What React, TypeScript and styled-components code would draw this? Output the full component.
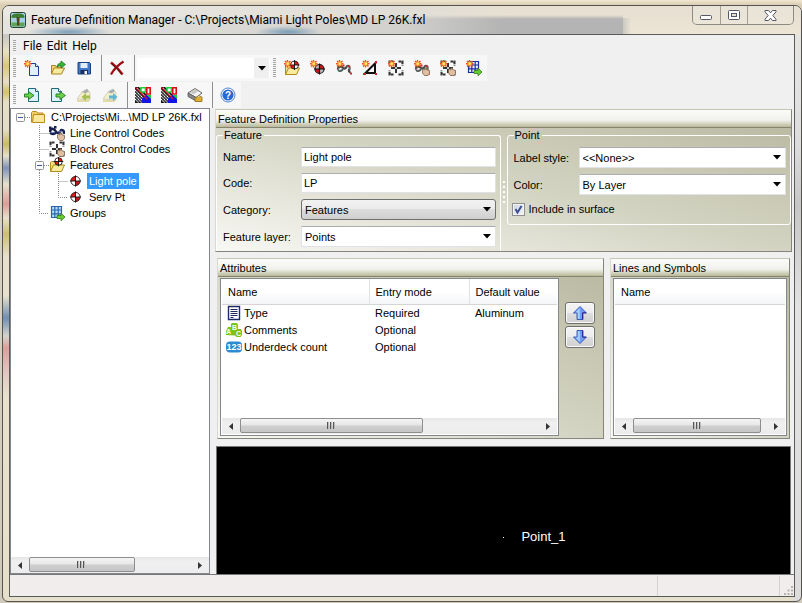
import React from "react";
import styled, { createGlobalStyle, css } from "styled-components";

const uiFont = `"Liberation Sans", Arial, sans-serif`;
const captionFont = `Roboto, "Noto Sans", sans-serif`;

const GlobalStyle = createGlobalStyle`
  *, *::before, *::after { box-sizing: border-box; }
  body { margin: 0; background: #ebe2cd; color: #000; font: 11px/14px ${uiFont}; }
  button, input, select { font: inherit; color: inherit; }
`;

/* ---------- window frame ---------- */

const Desktop = styled.div`
  display: flex;
  min-height: 100vh;
  padding: 5px 0 1px 2px;
  background: linear-gradient(#f1e6cf, #d9ceb4 5px, #d9d5c8 40px, #cfcabb);
`;

const Window = styled.div`
  flex: 1;
  min-width: 0;
  display: flex;
  flex-direction: column;
  border: 1px solid #555450;
  border-radius: 7px 7px 6px 6px;
  padding: 0 6px 4px 6px;
  background:
    linear-gradient(#ece5d5, #c9c8c3 30px, #e8e1c4 45px, #d9c878 60px, #e6dfc8 76px, #d5c267 86px, #e6dfc8 96px,
      #e3dcc6 124px, #c9ba62 138px, #e6e0cc 150px, #7f92b8 162px, #e6e0cc 178px, #dc9d98 198px, #e6e0cc 212px,
      #cdbf70 228px, #e6e0cc 250px, #e6e0cc 290px, #6f8fb4 312px, #d5d3cc 330px, #dba09c 342px, #e2c6c2 366px,
      #e8e2cc 390px, #e6dfc9) left / 7px 100% no-repeat,
    linear-gradient(#e8e4da, #e4e4e4 60px, #dcdcdc 140px, #c6c6c6 200px, #e2e2e2 300px, #dcdcdc) right / 8px 100% no-repeat,
    #e6dfcb;
`;

const TitleBar = styled.header`
  display: flex;
  align-items: center;
  height: 28px;
  margin: 0 -6px;
  padding-left: 7px;
  border-radius: 6px 6px 0 0;
  background:
    radial-gradient(ellipse closest-side, rgba(91, 137, 172, 0.75), transparent) 24px 20px / 84px 12px no-repeat,
    radial-gradient(ellipse closest-side, rgba(91, 137, 172, 0.75), transparent) 252px 20px / 66px 12px no-repeat,
    linear-gradient(90deg, rgba(235, 233, 228, 0.9), rgba(222, 221, 217, 0.7) 400px, transparent 500px),
    linear-gradient(transparent 9px, #b4b4b4 13px) left / 620px 100% no-repeat,
    linear-gradient(90deg, #cbc9c2, transparent) 620px 12px / 8px 16px no-repeat,
    linear-gradient(#e6dfd2, #ece5d5);
`;

const Title = styled.h1`
  flex: 1;
  margin: 0 0 0 5px;
  font: 400 12px/16px ${captionFont};
  white-space: nowrap;
`;

const CaptionButtons = styled.div`
  align-self: flex-start;
  display: flex;
  margin-right: 7px;
  border: 1px solid #8d8a82;
  border-top: 0;
  border-radius: 0 0 5px 5px;
`;

const CaptionButton = styled.button<{ $wide?: boolean }>`
  display: grid;
  place-items: center;
  width: ${(p) => (p.$wide ? 46 : 27)}px;
  height: 18px;
  padding: 0;
  border: 0;
  border-left: 1px solid #a29e94;
  background: rgba(255, 255, 255, 0.12);
  &:first-child { border-left: 0; }
`;

const Client = styled.div`
  flex: 1;
  display: flex;
  flex-direction: column;
  border: 1px solid #5a5a58;
  background: #f0f0f0;
`;

/* ---------- bars ---------- */

const MenuBar = styled.nav`
  display: flex;
  align-items: center;
  height: 20px;
  padding: 1px 0 0 3px;
`;

const MenuButton = styled.button`
  padding: 0;
  border: 0;
  margin-right: 5px;
  background: none;
  font: 12px/16px ${captionFont};
`;

const Grip = styled.span`
  flex: none;
  width: 3px;
  height: 20px;
  margin-right: 3px;
  background: repeating-linear-gradient(#a5a5a5 0 1px, #f4f4f4 1px 2px);
`;

const MenuGrip = styled(Grip)`
  height: 12px;
  margin-right: 7px;
`;

const ToolRows = styled.div`
  display: grid;
  gap: 1px;
`;

const ToolRow = styled.div`
  display: flex;
`;

const ToolBar = styled.div`
  display: flex;
  align-items: center;
  height: 26px;
  padding-left: 3px;
  background: #f7f7f7;
`;

const ToolButton = styled.button`
  display: grid;
  place-items: center;
  width: 26px;
  height: 24px;
  padding: 0;
  border: 0;
  background: none;
`;

const Separator = styled.span`
  width: 1px;
  height: 26px;
  margin: 0 2px 0 4px;
  background: #8f8f8f;
`;

const ToolCombo = styled.div`
  width: 133px;
  display: grid;
  grid-template-columns: 1fr 15px;
  height: 20px;
  background: #fff;
  border-right: 1px solid #fff;
`;

const ComboInput = styled.input`
  min-width: 0;
  border: 0;
  padding: 0 3px;
  background: #fff;
`;

const ComboDrop = styled.button`
  display: grid;
  place-items: center;
  padding: 0;
  border: 0;
  background: #efefef;
`;

/* ---------- work area ---------- */

const Work = styled.main`
  flex: 1;
  display: grid;
  grid-template-columns: 200px minmax(0, 1fr);
  column-gap: 5px;
  min-height: 0;
`;

const TreePane = styled.section`
  display: flex;
  flex-direction: column;
  justify-content: space-between;
  border: 1px solid #828790;
  background: #fff;
`;

const Tree = styled.ul`
  margin: 0;
  padding: 0;
  list-style: none;
`;

const TreeRow = styled.li`
  display: flex;
  align-items: center;
  height: 16px;
  svg { flex: none; }
`;

const TreeLabel = styled.span<{ $selected?: boolean }>`
  padding: 1px 2px;
  white-space: nowrap;
  ${(p) => p.$selected && css`background: #3399ff; color: #fff;`}
`;

const IconSlot = styled.span`
  display: grid;
  align-items: center;
  justify-items: start;
  width: 19px;
  height: 16px;
`;

const Right = styled.div`
  display: flex;
  flex-direction: column;
  padding: 1px 2px 0 0;
  min-width: 0;
`;

const Panel = styled.section`
  display: flex;
  flex-direction: column;
  border: 1px solid #85857c;
  border-left-color: #d9d9d2;
  border-top-color: #c6c6b6;
  background: linear-gradient(to bottom left, #b8b8a0, #d3d3c2 50%, #f8f8f4);
`;

const PanelTitle = styled.h2`
  flex: none;
  height: 18px;
  margin: 0;
  padding: 2px 2px 1px;
  border-bottom: 1px solid #85856f;
  background: linear-gradient(#fbfbf9, #f1f1ec 60%, #b9b998);
  font: inherit;
`;

const PropertyGrid = styled.div`
  display: grid;
  grid-template-columns: minmax(0, 1fr) 6px minmax(0, 1fr);
  align-items: start;
`;

const Group = styled.fieldset<{ $open?: boolean }>`
  display: grid;
  gap: 6px;
  min-width: 0;
  margin: 0;
  padding: 5px 4px 7px 6px;
  border: 1px solid #fff;
  border-radius: 3px;
  ${(p) => p.$open && css`border-bottom: 0; border-radius: 3px 3px 0 0; padding-bottom: 4px;`}
`;

const Legend = styled.legend`
  padding: 0 2px 0 1px;
`;

const Field = styled.div<{ $label: number }>`
  display: grid;
  grid-template-columns: ${(p) => p.$label}px minmax(0, 1fr);
  align-items: center;
`;

const TextInput = styled.input`
  width: 100%;
  height: 20px;
  padding: 0 2px;
  border: 1px solid #dfe2e6;
  border-top-color: #abadb3;
  border-radius: 1px;
  background: #fff;
`;

const SelectWrap = styled.span<{ $button?: boolean }>`
  display: grid;
  grid-template-columns: minmax(0, 1fr) 16px;
  align-items: center;
  height: 21px;
  border: 1px solid #dfe2e6;
  border-top-color: #abadb3;
  border-radius: 1px;
  background: #fff;
  select, svg { grid-row: 1; }
  select { grid-column: 1 / -1; }
  svg { grid-column: 2; justify-self: center; pointer-events: none; }
  ${(p) => p.$button && css`
    border-color: #707070;
    border-radius: 3px;
    background: linear-gradient(#f2f2f2, #ebebeb 50%, #dddddd 50%, #cfcfcf);
  `}
`;

const Select = styled.select`
  appearance: none;
  width: 100%;
  height: 19px;
  padding: 0 18px 0 3px;
  border: 0;
  background: transparent;
`;

const Splitter = styled.span`
  justify-self: center;
  align-self: center;
  width: 2px;
  height: 24px;
  margin-top: 6px;
  background: repeating-linear-gradient(#fff 0 2px, transparent 2px 5px);
`;

const CheckLabel = styled.label`
  display: flex;
  align-items: center;
  gap: 4px;
  height: 16px;
  margin-left: -2px;
`;

const CheckMark = styled.span`
  display: grid;
  input, svg { grid-area: 1 / 1; }
  svg { pointer-events: none; opacity: 0; }
  input:checked + svg { opacity: 1; }
`;

const CheckBox = styled.input`
  appearance: none;
  width: 13px;
  height: 13px;
  margin: 0;
  border: 1px solid #8e8f8f;
  background: linear-gradient(135deg, #cdd3dc, #f6f6f6);
  box-shadow: inset 0 0 0 1px #f4f4f4;
`;

const Lists = styled.div`
  display: grid;
  grid-template-columns: minmax(0, 387fr) minmax(0, 180fr);
  gap: 6px;
  height: 181px;
  margin: 6px 2px 0 2px;
`;

const AttributeBody = styled.div`
  flex: 1;
  display: grid;
  grid-template-columns: minmax(0, 1fr) 44px;
  padding: 1px 0 2px 2px;
`;

const SymbolBody = styled(AttributeBody)`
  grid-template-columns: minmax(0, 1fr);
  padding-right: 2px;
`;

const ListBox = styled.div`
  display: flex;
  flex-direction: column;
  justify-content: space-between;
  border: 1px solid #828790;
  background: #fff;
  padding: 0 1px 1px 1px;
`;

const Table = styled.table`
  width: 100%;
  table-layout: fixed;
  border-collapse: collapse;
  th, td { padding: 0 0 0 6px; text-align: left; font-weight: 400; white-space: nowrap; }
  th {
    height: 25px;
    padding-top: 1px;
    border-right: 1px solid #e0e2e4;
    border-bottom: 1px solid #d5d5d5;
    background: linear-gradient(#fff 50%, #f4f5f7);
  }
  th:last-child { border-right: 0; }
  td { height: 17px; }
`;

const NameCell = styled.span`
  display: flex;
  align-items: center;
  gap: 2px;
  margin-left: -2px;
`;

const MoveButtons = styled.div`
  display: flex;
  flex-direction: column;
  gap: 2px;
  padding: 24px 8px 0 6px;
`;

const MoveButton = styled.button`
  display: grid;
  place-items: center;
  height: 22px;
  padding: 0;
  border: 1px solid #707070;
  border-radius: 3px;
  background: linear-gradient(#f4f4f4, #ececec 50%, #dddddd 50%, #d0d0d0);
  box-shadow: inset 0 0 0 1px #fafafa;
`;

const ScrollTrack = styled.div`
  display: grid;
  grid-template-columns: 17px minmax(0, 1fr) 18px;
  height: 16px;
  background: linear-gradient(#e6e6e6, #f0f0f0 30%, #ececec);
`;

const ScrollArrow = styled.button`
  display: grid;
  place-items: center;
  padding: 0;
  border: 0;
  background: none;
`;

const ScrollThumb = styled.span<{ $size: number }>`
  display: grid;
  place-items: center;
  width: ${(p) => p.$size}%;
  height: 15px;
  margin-left: 1px;
  border: 1px solid #8e8e8e;
  border-radius: 2px;
  background: linear-gradient(#f5f5f5, #e6e6e6 48%, #cfcfcf 52%, #c6c6c8);
`;

const Preview = styled.section`
  flex: 1;
  display: flex;
  align-items: center;
  justify-content: center;
  gap: 17px;
  min-height: 128px;
  margin: 7px 1px 0 1px;
  padding: 53px 0 0 62px;
  border: 1px solid #777;
  border-width: 1px 1px 0 1px;
  background: #000;
  color: #fff;
  font-size: 13px;
  line-height: 16px;
`;

const PointDot = styled.span`
  width: 1px;
  height: 1px;
  background: #fff;
`;

const StatusBar = styled.footer`
  display: grid;
  grid-template-columns: minmax(0, 1fr) 122px 15px;
  height: 22px;
  border-top: 1px solid #777;
  padding-top: 1px;
  background: #f0edec;
`;

const StatusCell = styled.span`
  display: flex;
  align-items: flex-end;
  justify-content: flex-end;
  border-left: 1px solid #d4d2d0;
  &:first-child { border-left: 0; }
`;

/* ---------- icons ---------- */

type Kids = { children: React.ReactNode };
const Ico = ({ children }: Kids) => (
  <svg width="16" height="16" viewBox="0 0 16 16" aria-hidden="true">{children}</svg>
);

const IconText = styled.text`
  font: 700 7px ${uiFont};
  fill: #fff;
`;

const HelpMark = styled(IconText)`
  font-size: 10px;
`;

const NumberMark = styled(IconText)`
  font-size: 9px;
`;

const Burst = () => (
  <g>
    <path d="M3.500 0v7.500M0 3.800h7.500M1 1l5.500 5.500M6.500 1L1 6.500" stroke="#f04a1c" strokeWidth="1.400" />
    <circle cx="3.700" cy="3.700" r="2.200" fill="#ff9a2b" />
    <circle cx="3.700" cy="3.700" r="1.200" fill="#fff27a" />
  </g>
);

const Quad = ({ x, y, r }: { x: number; y: number; r: number }) => (
  <g transform={`translate(${x} ${y})`}>
    <circle r={r} fill="#fff" />
    <path d={`M0 0V${-r}A${r} ${r} 0 0 1 ${r} 0z`} fill="#e81818" />
    <path d={`M0 0V${r}A${r} ${r} 0 0 1 ${-r} 0z`} fill="#e81818" />
    <circle r={r} fill="none" stroke="#2a1414" strokeWidth=".9" />
    <path d={`M0 ${-r - 1}V${r + 1}M${-r - 1} 0H${r + 1}`} stroke="#111" strokeWidth=".9" />
  </g>
);

const RedQuad = ({ x, y, r }: { x: number; y: number; r: number }) => (
  <g transform={`translate(${x} ${y})`}>
    <circle r={r} fill="#fff" />
    <path d={`M0 0V${-r}A${r} ${r} 0 0 0 ${-r} 0z`} fill="#e81818" />
    <path d={`M0 0V${r}A${r} ${r} 0 0 0 ${r} 0z`} fill="#c81414" />
    <circle r={r} fill="none" stroke="#2a1414" strokeWidth=".9" />
    <path d={`M0 ${-r - 1}V${r + 1}M${-r - 1} 0H${r + 1}`} stroke="#111" strokeWidth=".9" />
  </g>
);

const DarkQuad = ({ x, y, r }: { x: number; y: number; r: number }) => (
  <g transform={`translate(${x} ${y})`}>
    <circle r={r} fill="#b9b9b9" />
    <path d={`M0 0V${-r}A${r} ${r} 0 0 1 ${r} 0z`} fill="#d01818" />
    <path d={`M0 0V${r}A${r} ${r} 0 0 1 ${-r} 0z`} fill="#d01818" />
    <circle r={r} fill="none" stroke="#222" strokeWidth="1.200" />
    <path d={`M0 ${-r - 1}V${r + 1}M${-r - 1} 0H${r + 1}`} stroke="#111" strokeWidth="1.200" />
  </g>
);

const Folder = ({ y = 0 }: { y?: number }) => (
  <g transform={`translate(0 ${y})`}>
    <path d="M1.500 13.500v-9l1-1h4l1 1.500h5v2" fill="#f7dd83" stroke="#b08a1c" />
    <path d="M1.500 13.500L4.500 7h11l-3 6.500z" fill="#fbeb9c" stroke="#b08a1c" />
  </g>
);

const Hand = () => (
  <path d="M8.500 10l1-1 1.500 1V8h1.500v1.500l3 1v3L14 15.500h-3.500L8.500 13z" fill="#dfbfa2" stroke="#7d6048" strokeWidth=".8" />
);

const Curve = () => (
  <g>
    <path d="M2 9.500c0-3.500 3-3.500 4.500-2s3 1.500 4-.5 3.500-1 3 1.500-1.500 3 1 4" fill="none" stroke="#4c4c4c" strokeWidth="2.400" />
    <path d="M2 9.500c1 2.500 3.500 2 5-.5" fill="none" stroke="#4c4c4c" strokeWidth="1.800" />
    <path d="M2.500 9c1 1.500 2.500 1 3.500-1M11 7.500c1-1 2-.5 2 1.500" fill="none" stroke="#c8c8c8" strokeWidth=".9" />
    <path d="M6.500 4.500h2v2h-2zM14 12.500h2v2h-2zM12 5.500h2v1.500h-2z" fill="#d5202a" />
  </g>
);

const Cross = () => (
  <g fill="none" stroke="#333">
    <path d="M8 3v10M3 8h10" strokeWidth="2" />
    <path d="M5.500 1.500H1.500v4M10.500 1.500h4v4M5.500 14.500H1.500v-4M10.500 14.500h4v-4" strokeWidth="2" strokeDasharray="3 .6" />
    <circle cx="8" cy="8" r="1" fill="#fff" stroke="none" />
  </g>
);

const GridArrow = ({ light }: { light?: boolean }) => (
  <g>
    <path d="M2 1.500h10.500v11H2z" fill={light ? "#b8dcf6" : "#e8f0ff"} />
    <path d="M2.500 1v12M5.800 1v12M9.200 1v12M12.500 1v12M2 1.500h11M2 5h11M2 8.800h11M2 12.500h11" stroke={light ? "#2b63ad" : "#1b2f9c"} strokeWidth="1.200" />
    <path d="M8 10.500h4V8.200l4 3.800-4 3.800v-2.300H8z" fill="#66cc2f" stroke="#2f7d12" strokeWidth=".8" />
  </g>
);

const PageWithArrow = ({ out }: { out?: boolean }) => (
  <Ico>
    <path d={out ? "M1.500 1.500h7l3 3v10h-10z" : "M4.500 1.500h7l3 3v10h-10z"} fill="#d9f2fb" stroke="#1c6b7c" />
    <path d={out ? "M8.500 1.500v3h3" : "M11.500 1.500v3h3"} fill="#fff" stroke="#1c6b7c" />
    <path d={out ? "M6 7h4V4.500L15.500 8.500 10 12.500V10H6z" : "M.5 7h4V4.500L10 8.500l-5.500 4V10h-4z"} fill="#6fd04a" stroke="#1d7a20" strokeWidth=".9" />
  </Ico>
);

const Tag = ({ arrow, flip }: { arrow: string; flip?: boolean }) => (
  <Ico>
    <path d="M1 12l5-7 5-3 3 4v7z" fill="#f3efcb" stroke="#c9c7ab" strokeWidth=".8" />
    <path d="M6 5l5-3 2 2.500-4 2z" fill="#a9adb2" />
    <path d="M1 14h12" stroke="#ddd28c" strokeWidth="1.500" />
    <path d={flip ? "M7 8.500h4V6l4.500 4-4.500 4v-2.500H7z" : "M14 8.500h-4V6l-4.500 4 4.500 4v-2.500h4z"} fill={arrow} />
  </Ico>
);

const Hatch = () => (
  <Ico>
    <path d="M0 0h16v16H0z" fill="#fff" />
    <path d="M0 0h4l12 12v4H0z" fill="#111" />
    <path d="M0 3l12 12M0 6l9.500 9.500M0 9l6.500 6.500M0 12l3.500 3.500M2 1l12 12" stroke="#fff" strokeWidth="1.100" strokeDasharray="1.500 .6" />
    <path d="M6 .8h4.500V5H6z" fill="#fff" stroke="#12d532" strokeWidth="1.600" />
    <path d="M11.800 .8h3.400V7h-3.400z" fill="#fff" stroke="#d90e18" strokeWidth="1.600" />
    <path d="M16 8v4l-4-4z" fill="#12d532" />
    <path d="M7 11.500l4.500-3.500 4.500 4v4H7z" fill="#1414e6" />
    <path d="M0 0l12 12" stroke="#e01820" strokeWidth="1.200" />
  </Ico>
);

const icons: Record<string, React.ReactNode> = {
  create: (
    <Ico>
      <path d="M5.500 3.500h6l3 3v9h-9z" fill="#e2effd" stroke="#1d3f98" />
      <path d="M11.500 3.500v3h3" fill="#fff" stroke="#1d3f98" />
      <Burst />
    </Ico>
  ),
  open: (
    <Ico>
      <path d="M1.500 13.500v-8h4l1 1.500h6" fill="#f3d774" stroke="#a9831d" />
      <path d="M1.500 14L4 8h10.500l-3 6z" fill="#fbeb9c" stroke="#a9831d" />
      <path d="M7 7c.5-3 2-4 4-4V1l4.500 3.500L11 8V5.500C9.500 5.500 8.500 6 7 7z" fill="#35b834" stroke="#126a17" strokeWidth=".7" />
    </Ico>
  ),
  save: (
    <Ico>
      <path d="M2 2.500h11.500l1 1v10.500H2z" fill="#3f78c8" stroke="#1c3f80" />
      <path d="M4.500 3h7v5h-7z" fill="#e3edf8" />
      <path d="M4.500 10h7.500v4H4.500z" fill="#1b2f5c" />
      <path d="M8.500 11h2.500v3H8.500z" fill="#f5f5f5" />
    </Ico>
  ),
  remove: (
    <Ico>
      <path d="M2 2.500c4 3 8 7 11.500 12" fill="none" stroke="#9b0f14" strokeWidth="2.600" />
      <path d="M14.500 1.500C9 5 5 9 2 14.500" fill="none" stroke="#9b0f14" strokeWidth="2.200" />
      <path d="M3 4l9.500 9.500" stroke="#4a1014" strokeWidth=".8" />
    </Ico>
  ),
  newFeatureFolder: <Ico><Folder y={1} /><Quad x={10.500} y={5} r={4} /><Burst /></Ico>,
  newPoint: <Ico><DarkQuad x={9.500} y={9} r={4.500} /><Burst /></Ico>,
  newLine: <Ico><Curve /><Burst /></Ico>,
  newPolygon: (
    <Ico>
      <path d="M3.500 13L13 3.500V13z" fill="#f7f7f7" stroke="#111" strokeWidth="2" />
      <path d="M1 13h3v2H1zM13 13h2v2h-2zM13 1h2v2.500h-2z" fill="#d5202a" />
      <Burst />
    </Ico>
  ),
  newBlock: <Ico><Cross /><Burst /></Ico>,
  newLineCode: <Ico><Curve /><Hand /><Burst /></Ico>,
  newBlockCode: <Ico><Cross /><Hand /><Burst /></Ico>,
  newGroup: <Ico><GridArrow /><Burst /></Ico>,
  importFile: <PageWithArrow />,
  exportFile: <PageWithArrow out />,
  importTag: <Tag arrow="#a5bd52" />,
  exportTag: <Tag arrow="#5fb4d4" flip />,
  hatch: <Hatch />,
  stack: (
    <Ico>
      <path d="M1 6l7-4.500L15 6l-6 4.500z" fill="#f6f6f6" stroke="#555" strokeWidth=".9" />
      <path d="M1 6v3.500l8 4.500v-3.500z" fill="#8b8b86" stroke="#555" strokeWidth=".8" />
      <path d="M3 5.500l5-3.200 3 2.200-4.500 3z" fill="#c8c8c4" />
      <path d="M8 10.500h7v4H8z" fill="#e2ae30" stroke="#8e6a17" strokeWidth=".8" />
      <path d="M9.500 10.500l2-2 3.500 1.500v.5" fill="#f6db7d" stroke="#8e6a17" strokeWidth=".8" />
    </Ico>
  ),
  help: (
    <Ico>
      <circle cx="8" cy="8" r="7" fill="#fff" stroke="#3b78cc" strokeWidth=".9" />
      <circle cx="8" cy="8" r="5.600" fill="#2868d4" />
      <HelpMark x="8" y="12" textAnchor="middle">?</HelpMark>
    </Ico>
  ),
  folder: (
    <Ico>
      <path d="M1.500 13.500v-10l1-1h4l1 1.500h5.500v2" fill="#f4cf63" stroke="#b98b1d" />
      <path d="M3.500 5.500h11v8h-12z" fill="#fbe79c" stroke="#b98b1d" />
    </Ico>
  ),
  lineCodes: (
    <Ico>
      <path d="M1 7c0-4 4-4 5.500-1s4 2 5 0 4-1 3.500 3" fill="none" stroke="#18204f" strokeWidth="2.600" />
      <path d="M1 7.500c1.500 2.500 4.500 2 6 0" fill="none" stroke="#18204f" strokeWidth="2.200" />
      <path d="M2 7c1 1 3 1 4-.5M9 7c1.500 0 2.500-1 4-1" fill="none" stroke="#6478c4" />
      <path d="M0 1.500h2.500V4H0zM5 1h2.500v2.500H5z" fill="#18204f" />
      <Hand />
    </Ico>
  ),
  blockCodes: <Ico><Cross /><Hand /></Ico>,
  features: <Ico><Folder y={1} /><Quad x={9.500} y={4.500} r={3.800} /></Ico>,
  point: <Ico><RedQuad x={7.500} y={8} r={4.600} /></Ico>,
  groups: <Ico><GridArrow light /></Ico>,
  list: (
    <Ico>
      <path d="M2.500 1.500h11v13h-11z" fill="#fff" stroke="#1d2a66" strokeWidth="1.400" />
      <path d="M4.500 4.500h7M4.500 6.500h7M4.500 8.500h7M4.500 10.500h7M4.500 12.500h3" stroke="#1d2a66" />
    </Ico>
  ),
  text: (
    <Ico>
      <path d="M0 13V9l2-4h3V2l1-1h5l1 2v4h3l1 2v4l-1.500 2h-4L9 13.500z" fill="#7cc414" />
      <IconText x="0" y="12">A</IconText>
      <IconText x="6" y="8">B</IconText>
      <IconText x="10" y="14">C</IconText>
    </Ico>
  ),
  number: (
    <Ico>
      <rect x="0" y="2.500" width="16" height="11" rx="4" fill="#2b8bd0" />
      <NumberMark x="8" y="11" textAnchor="middle">123</NumberMark>
    </Ico>
  ),
  app: (
    <Ico>
      <rect x=".5" y=".5" width="15" height="15" rx="2" fill="#a7cdea" stroke="#24432b" />
      <path d="M1.500 10.500h13v4h-13z" fill="#5fa455" />
      <path d="M1.500 5.500C1 2 5 1.500 8 1.500S15 2 14.500 5.500c-1.500 1-3.500 0-5 .5L9.300 9H6.700L6.500 6C5 5.500 3 6.500 1.500 5.500z" fill="#3c7d2f" />
      <path d="M6 5l1 1v7.500h2.300V6l1-1-1.500.5z" fill="#5d4020" />
    </Ico>
  ),
};

const Down = () => (
  <svg width="8" height="5" viewBox="0 0 8 5" aria-hidden="true"><path d="M0 0h8L4 4.500z" fill="#000" /></svg>
);

const MoveArrow = ({ down }: { down?: boolean }) => (
  <svg width="14" height="14" viewBox="0 0 14 14" aria-hidden="true">
    <g transform={down ? "matrix(1 0 0 -1 0 14)" : undefined}>
      <path d="M7 .5L13.500 7H10v6.500H4V7H.5z" fill="#6f9df4" stroke="#2f4fb5" strokeWidth=".9" />
      <path d="M4.800 6.500V13h2V2L2.500 6.300z" fill="#a3d0ff" />
      <path d="M9.500 6.500v7M10 6.800h3" stroke="#35268c" />
    </g>
  </svg>
);

const ScrollBar = ({ size }: { size: number }) => (
  <ScrollTrack>
    <ScrollArrow type="button" aria-label="Scroll left">
      <svg width="4" height="7" viewBox="0 0 4 7"><path d="M4 0v7L0 3.500z" fill="#333" /></svg>
    </ScrollArrow>
    <ScrollThumb $size={size}>
      <svg width="9" height="7" viewBox="0 0 9 7"><path d="M.5 0v7M3.500 0v7M6.500 0v7" stroke="#555" /><path d="M1.500 0v7M4.500 0v7M7.500 0v7" stroke="#bbb" /></svg>
    </ScrollThumb>
    <ScrollArrow type="button" aria-label="Scroll right">
      <svg width="4" height="7" viewBox="0 0 4 7"><path d="M0 0v7l4-3.500z" fill="#333" /></svg>
    </ScrollArrow>
  </ScrollTrack>
);

/* ---------- tree ---------- */

type Cell = "blank" | "pipe" | "tee" | "elbow" | "root" | "open";

const connectors: Record<Cell, React.ReactNode> = {
  blank: null,
  pipe: <path d="M9.500 0v16" />,
  tee: <path d="M9.500 0v16M9.500 8.500H19" />,
  elbow: <path d="M9.500 0v8.500H19" />,
  root: <path d="M14 8.500h5" />,
  open: <path d="M9.500 0v4M9.500 13v3M14 8.500h5" />,
};

const Connector = ({ kind }: { kind: Cell }) => (
  <svg width="19" height="16" viewBox="0 0 19 16" aria-hidden="true">
    <g fill="none" stroke="#8a8a8a" strokeDasharray="1 1">{connectors[kind]}</g>
    {(kind === "root" || kind === "open") && (
      <g>
        <rect x="5.500" y="4.500" width="8" height="8" rx="1" fill="#fafafa" stroke="#8f9499" />
        <path d="M7 8.500h5" stroke="#3a57a0" />
      </g>
    )}
  </svg>
);

const treeItems: { cells: Cell[]; icon: string; label: string; selected?: boolean }[] = [
  { cells: ["root"], icon: "folder", label: "C:\\Projects\\Mi...\\MD LP 26K.fxl" },
  { cells: ["blank", "tee"], icon: "lineCodes", label: "Line Control Codes" },
  { cells: ["blank", "tee"], icon: "blockCodes", label: "Block Control Codes" },
  { cells: ["blank", "open"], icon: "features", label: "Features" },
  { cells: ["blank", "pipe", "tee"], icon: "point", label: "Light pole", selected: true },
  { cells: ["blank", "pipe", "elbow"], icon: "point", label: "Serv Pt" },
  { cells: ["blank", "elbow"], icon: "groups", label: "Groups" },
];

const attributes = [
  { icon: "list", name: "Type", mode: "Required", value: "Aluminum" },
  { icon: "text", name: "Comments", mode: "Optional", value: "" },
  { icon: "number", name: "Underdeck count", mode: "Optional", value: "" },
];

const Tool = ({ icon, label }: { icon: string; label: string }) => (
  <ToolButton type="button" aria-label={label}>{icons[icon]}</ToolButton>
);

const DropDown = ({ id, value, button }: { id: string; value: string; button?: boolean }) => (
  <SelectWrap $button={button}>
    <Select id={id} defaultValue={value}><option>{value}</option></Select>
    <Down />
  </SelectWrap>
);

export default function App() {
  return (
    <>
      <GlobalStyle />
      <Desktop>
        <Window>
          <TitleBar>
            {icons.app}
            <Title>Feature Definition Manager - C:\Projects\Miami Light Poles\MD LP 26K.fxl</Title>
            <CaptionButtons>
              <CaptionButton type="button" aria-label="Minimize">
                <svg width="13" height="12"><rect x=".5" y="6.500" width="11" height="4" rx="1" fill="#fff" stroke="#53566b" /></svg>
              </CaptionButton>
              <CaptionButton type="button" aria-label="Maximize">
                <svg width="12" height="10"><rect x=".5" y=".5" width="11" height="9" rx="1" fill="#fff" stroke="#53566b" /><rect x="3.500" y="3.500" width="5" height="3" fill="#e8e2d5" stroke="#53566b" /></svg>
              </CaptionButton>
              <CaptionButton type="button" aria-label="Close" $wide>
                <svg width="13" height="11" viewBox="0 0 13 11"><path d="M1 .5h3.500l2 2.300 2-2.300H12v1.300L8.800 5.500 12 9.200v1.300H8.500l-2-2.300-2 2.300H1V9.200l3.200-3.700L1 1.800z" fill="#fff" stroke="#53566b" /></svg>
              </CaptionButton>
            </CaptionButtons>
          </TitleBar>

          <Client>
            <MenuBar>
              <MenuGrip />
              <MenuButton type="button">File</MenuButton>
              <MenuButton type="button">Edit</MenuButton>
              <MenuButton type="button">Help</MenuButton>
            </MenuBar>
            <ToolRows>
              <ToolRow>
                <ToolBar>
                  <Grip />
                  <Tool icon="create" label="New" />
                  <Tool icon="open" label="Open" />
                  <Tool icon="save" label="Save" />
                  <Separator />
                  <Tool icon="remove" label="Delete" />
                  <Separator />
                  <ToolCombo>
                    <ComboInput aria-label="Find" />
                    <ComboDrop type="button" aria-label="Show list"><Down /></ComboDrop>
                  </ToolCombo>
                </ToolBar>
                <ToolBar>
                  <Grip />
                  <Tool icon="newFeatureFolder" label="New category" />
                  <Tool icon="newPoint" label="New point feature" />
                  <Tool icon="newLine" label="New line feature" />
                  <Tool icon="newPolygon" label="New polygon feature" />
                  <Tool icon="newBlock" label="New block" />
                  <Tool icon="newLineCode" label="New line control code" />
                  <Tool icon="newBlockCode" label="New block control code" />
                  <Tool icon="newGroup" label="New group" />
                </ToolBar>
              </ToolRow>
              <ToolRow>
                <ToolBar>
                  <Grip />
                  <Tool icon="importFile" label="Import" />
                  <Tool icon="exportFile" label="Export" />
                  <Tool icon="importTag" label="Import attributes" />
                  <Tool icon="exportTag" label="Export attributes" />
                  <Separator />
                  <Tool icon="hatch" label="Line styles" />
                  <Tool icon="hatch" label="Layer styles" />
                  <Tool icon="stack" label="Layers" />
                  <Separator />
                  <Tool icon="help" label="Help topics" />
                </ToolBar>
              </ToolRow>
            </ToolRows>

            <Work>
              <TreePane>
                <Tree>
                  {treeItems.map((item) => (
                    <TreeRow key={item.label}>
                      {item.cells.map((kind, i) => <Connector key={i} kind={kind} />)}
                      <IconSlot>{icons[item.icon]}</IconSlot>
                      <TreeLabel $selected={item.selected}>{item.label}</TreeLabel>
                    </TreeRow>
                  ))}
                </Tree>
                <ScrollBar size={65} />
              </TreePane>

              <Right>
                <Panel>
                  <PanelTitle>Feature Definition Properties</PanelTitle>
                  <PropertyGrid>
                    <Group $open>
                      <Legend>Feature</Legend>
                      <Field $label={78}>
                        <label htmlFor="name">Name:</label>
                        <TextInput id="name" defaultValue="Light pole" />
                      </Field>
                      <Field $label={78}>
                        <label htmlFor="code">Code:</label>
                        <TextInput id="code" defaultValue="LP" />
                      </Field>
                      <Field $label={78}>
                        <label htmlFor="category">Category:</label>
                        <DropDown id="category" value="Features" button />
                      </Field>
                      <Field $label={78}>
                        <label htmlFor="layer">Feature layer:</label>
                        <DropDown id="layer" value="Points" />
                      </Field>
                    </Group>
                    <Splitter />
                    <Group>
                      <Legend>Point</Legend>
                      <Field $label={65}>
                        <label htmlFor="labelStyle">Label style:</label>
                        <DropDown id="labelStyle" value="<<None>>" />
                      </Field>
                      <Field $label={65}>
                        <label htmlFor="color">Color:</label>
                        <DropDown id="color" value="By Layer" />
                      </Field>
                      <CheckLabel>
                        <CheckMark>
                          <CheckBox type="checkbox" defaultChecked />
                          <svg width="13" height="13" viewBox="0 0 13 13" aria-hidden="true"><path d="M3.500 6l2 3.500L9.500 3" fill="none" stroke="#3b4f9a" strokeWidth="2" /></svg>
                        </CheckMark>
                        Include in surface
                      </CheckLabel>
                    </Group>
                  </PropertyGrid>
                </Panel>

                <Lists>
                  <Panel>
                    <PanelTitle>Attributes</PanelTitle>
                    <AttributeBody>
                      <ListBox>
                        <Table>
                          <colgroup><col width="147" /><col width="100" /><col /></colgroup>
                          <thead><tr><th>Name</th><th>Entry mode</th><th>Default value</th></tr></thead>
                          <tbody>
                            {attributes.map((a) => (
                              <tr key={a.name}>
                                <td><NameCell>{icons[a.icon]}{a.name}</NameCell></td>
                                <td>{a.mode}</td>
                                <td>{a.value}</td>
                              </tr>
                            ))}
                          </tbody>
                        </Table>
                        <ScrollBar size={61} />
                      </ListBox>
                      <MoveButtons>
                        <MoveButton type="button" aria-label="Move up"><MoveArrow /></MoveButton>
                        <MoveButton type="button" aria-label="Move down"><MoveArrow down /></MoveButton>
                      </MoveButtons>
                    </AttributeBody>
                  </Panel>
                  <Panel>
                    <PanelTitle>Lines and Symbols</PanelTitle>
                    <SymbolBody>
                      <ListBox>
                        <Table><thead><tr><th>Name</th></tr></thead></Table>
                        <ScrollBar size={95} />
                      </ListBox>
                    </SymbolBody>
                  </Panel>
                </Lists>

                <Preview><PointDot />Point_1</Preview>
              </Right>
            </Work>

            <StatusBar>
              <StatusCell />
              <StatusCell />
              <StatusCell>
                <svg width="11" height="11" viewBox="0 0 11 11" aria-hidden="true"><path d="M8 1h2v2H8zM8 4.500h2v2H8zM8 8h2v2H8zM4.500 4.500h2v2h-2zM4.500 8h2v2h-2zM1 8h2v2H1z" fill="#b5b2b0" /></svg>
              </StatusCell>
            </StatusBar>
          </Client>
        </Window>
      </Desktop>
    </>
  );
}
